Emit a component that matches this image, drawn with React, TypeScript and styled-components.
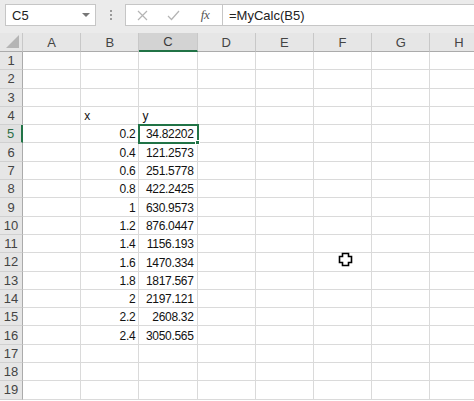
import React from "react";
import styled, { createGlobalStyle } from "styled-components";

const Global = createGlobalStyle`
  html, body { margin: 0; padding: 0; background: #ffffff; overflow: hidden; }
  body { font-family: "Liberation Sans", Arial, sans-serif; }
`;

const COLS = ["A", "B", "C", "D", "E", "F", "G", "H"];
const ROW_H = 18.3;
const COL_W = 58.2;

const data: Record<string, { v: string; align: "left" | "right" }> = {
  B4: { v: "x", align: "left" },
  C4: { v: "y", align: "left" },
};
const xs = ["0.2", "0.4", "0.6", "0.8", "1", "1.2", "1.4", "1.6", "1.8", "2", "2.2", "2.4"];
const ys = ["34.82202", "121.2573", "251.5778", "422.2425", "630.9573", "876.0447", "1156.193", "1470.334", "1817.567", "2197.121", "2608.32", "3050.565"];
xs.forEach((x, i) => {
  data[`B${i + 5}`] = { v: x, align: "right" };
  data[`C${i + 5}`] = { v: ys[i], align: "right" };
});

const Page = styled.div`
  width: 474px;
  height: 401px;
  background: #ebebeb;
  display: flex;
  flex-direction: column;
  overflow: hidden;
`;

const FormulaBar = styled.div`
  height: 33px;
  display: flex;
  align-items: flex-start;
  padding: 4px 0 0 5px;
  box-sizing: border-box;
`;

const NameBox = styled.div`
  width: 91px;
  height: 22px;
  box-sizing: border-box;
  background: #fff;
  border: 1px solid #c6c6c6;
  display: flex;
  align-items: center;
  justify-content: space-between;
  padding: 0 5px 0 6px;
  font-size: 13px;
  color: #222;
`;

const Caret = styled.span`
  width: 0;
  height: 0;
  border-left: 4px solid transparent;
  border-right: 4px solid transparent;
  border-top: 4px solid #777;
`;

const Dots = styled.div`
  width: 29px;
  height: 22px;
  display: flex;
  flex-direction: column;
  align-items: center;
  justify-content: center;
  gap: 2px;
  & > span {
    width: 2px;
    height: 2px;
    background: #9a9a9a;
  }
`;

const ActionBox = styled.div`
  width: 97px;
  height: 22px;
  box-sizing: border-box;
  background: #fff;
  border: 1px solid #c6c6c6;
  border-right: none;
  display: flex;
  align-items: center;
`;

const ActionIcon = styled.span<{ $w: number }>`
  width: ${(p) => p.$w}px;
  display: flex;
  justify-content: center;
  align-items: center;
`;

const Fx = styled.span`
  font-family: "Liberation Serif", "Times New Roman", serif;
  font-style: italic;
  font-size: 13px;
  color: #555;
  letter-spacing: -0.5px;
`;

const FormulaInput = styled.div`
  flex: 1;
  height: 22px;
  box-sizing: border-box;
  background: #fff;
  border: 1px solid #c6c6c6;
  border-right: none;
  display: flex;
  align-items: center;
  padding-left: 6px;
  font-size: 13px;
  color: #222;
`;

const SheetWrap = styled.div`
  position: relative;
  flex: 1;
  background: #fff;
`;

const Grid = styled.div`
  display: grid;
  grid-template-columns: 23px repeat(8, ${COL_W}px);
  grid-template-rows: 19px repeat(19, ${ROW_H}px);
`;

const Corner = styled.div`
  background: #e6e6e6;
  border-right: 1px solid #c8c8c8;
  border-bottom: 1px solid #ababab;
  box-sizing: border-box;
  position: relative;
  &::after {
    content: "";
    position: absolute;
    right: 3px;
    bottom: 3px;
    width: 0;
    height: 0;
    border-left: 13px solid transparent;
    border-bottom: 13px solid #b5b5b5;
  }
`;

const ColHeader = styled.div<{ $active?: boolean }>`
  background: ${(p) => (p.$active ? "#d3d3d3" : "#e6e6e6")};
  border-right: 1px solid #c8c8c8;
  border-bottom: ${(p) => (p.$active ? "2px solid #217346" : "1px solid #ababab")};
  box-sizing: border-box;
  display: flex;
  align-items: center;
  justify-content: center;
  font-size: 13px;
  color: ${(p) => (p.$active ? "#3a3a3a" : "#444")};
`;

const RowHeader = styled.div<{ $active?: boolean }>`
  background: ${(p) => (p.$active ? "#e1e1e1" : "#e6e6e6")};
  border-right: ${(p) => (p.$active ? "2px solid #217346" : "1px solid #ababab")};
  border-bottom: 1px solid #d0d0d0;
  box-sizing: border-box;
  display: flex;
  align-items: center;
  justify-content: center;
  font-size: 13px;
  color: ${(p) => (p.$active ? "#2d6e46" : "#444")};
`;

const Cell = styled.div<{ $align: "left" | "right"; $selected?: boolean }>`
  border-right: 1px solid #dadada;
  border-bottom: 1px solid #dadada;
  box-sizing: border-box;
  display: flex;
  align-items: flex-end;
  justify-content: ${(p) => (p.$align === "right" ? "flex-end" : "flex-start")};
  padding: 0 3px 1px 3px;
  font-size: 12px;
  letter-spacing: -0.3px;
  color: #111;
  white-space: nowrap;
  position: relative;
  ${(p) =>
    p.$selected &&
    `
    outline: 2px solid #217346;
    outline-offset: -1px;
    z-index: 2;
    &::after {
      content: "";
      position: absolute;
      right: -3px;
      bottom: -3px;
      width: 5px;
      height: 5px;
      background: #217346;
      border: 1px solid #fff;
      box-sizing: border-box;
    }
  `}
`;

const Cursor = styled.svg`
  position: absolute;
  left: 338px;
  top: 219px;
  z-index: 5;
`;

export default function App() {
  const rows = Array.from({ length: 19 }, (_, i) => i + 1);
  return (
    <Page>
      <Global />
      <FormulaBar>
        <NameBox>
          <span>C5</span>
          <Caret />
        </NameBox>
        <Dots>
          <span />
          <span />
          <span />
        </Dots>
        <ActionBox>
          <ActionIcon $w={32}>
            <svg width="11" height="11" viewBox="0 0 11 11">
              <path d="M1 1 L10 10 M10 1 L1 10" stroke="#b4b4b4" strokeWidth="1.2" fill="none" />
            </svg>
          </ActionIcon>
          <ActionIcon $w={30}>
            <svg width="13" height="11" viewBox="0 0 13 11">
              <path d="M1 6 L4.5 9.5 L12 1" stroke="#b4b4b4" strokeWidth="1.2" fill="none" />
            </svg>
          </ActionIcon>
          <ActionIcon $w={34}>
            <Fx>fx</Fx>
          </ActionIcon>
        </ActionBox>
        <FormulaInput>=MyCalc(B5)</FormulaInput>
      </FormulaBar>
      <SheetWrap>
        <Grid>
          <Corner />
          {COLS.map((c) => (
            <ColHeader key={c} $active={c === "C"}>
              {c}
            </ColHeader>
          ))}
          {rows.map((r) => (
            <React.Fragment key={r}>
              <RowHeader $active={r === 5}>{r}</RowHeader>
              {COLS.map((c) => {
                const d = data[`${c}${r}`];
                return (
                  <Cell key={c} $align={d ? d.align : "left"} $selected={c === "C" && r === 5}>
                    {d ? d.v : ""}
                  </Cell>
                );
              })}
            </React.Fragment>
          ))}
        </Grid>
        <Cursor width="15" height="15" viewBox="0 0 15 15">
          <path
            d="M4.5 1.5 H10.5 V4.5 H13.5 V10.5 H10.5 V13.5 H4.5 V10.5 H1.5 V4.5 H4.5 Z"
            fill="#ffffff"
            stroke="#000000"
            strokeWidth="1.6"
          />
        </Cursor>
      </SheetWrap>
    </Page>
  );
}
